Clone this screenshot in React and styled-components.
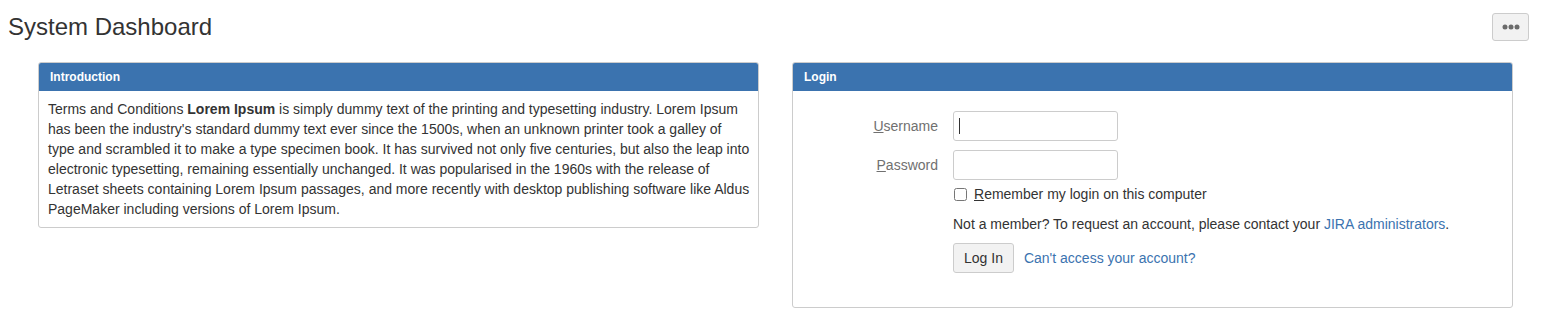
import styled, { createGlobalStyle } from "styled-components";

const GlobalStyle = createGlobalStyle`
  body {
    margin: 0;
    background: #fff;
    font-family: "Liberation Sans", Arial, sans-serif;
    font-size: 14px;
    color: #333;
  }
`;

const PageHeader = styled.header`
  display: flex;
  align-items: center;
  justify-content: space-between;
  padding: 13px 22px 0 8px;
  height: 28px;
`;

const Title = styled.h1`
  margin: 0;
  font-size: 24px;
  line-height: 28px;
  font-weight: normal;
  color: #333;
`;

const MoreButton = styled.button`
  display: flex;
  align-items: center;
  justify-content: center;
  width: 37px;
  height: 28px;
  padding: 0;
  background: #f2f2f2;
  border: 1px solid #ccc;
  border-radius: 3px;
`;

const Columns = styled.div`
  display: grid;
  grid-template-columns: 1fr 1fr;
  align-items: start;
  gap: 33px;
  padding: 21px 38px 0 38px;
`;

const Panel = styled.section`
  border: 1px solid #ccc;
  border-radius: 3px;
  overflow: hidden;
`;

const PanelTitle = styled.h3`
  margin: 0;
  height: 28px;
  padding: 0 11px;
  background: #3b73af;
  color: #fff;
  font-size: 12px;
  font-weight: bold;
  line-height: 28px;
`;

const PanelBody = styled.div`
  padding: ${(p) => p.$pad || "8px 2px 8px 9px"};
  line-height: 20px;
`;

const Row = styled.div`
  display: grid;
  grid-template-columns: 145px 1fr;
  column-gap: 15px;
  align-items: center;
  margin-top: ${(p) => p.$top || 0}px;
`;

const Label = styled.label`
  text-align: right;
  color: #707070;
  u {
    text-decoration: underline;
  }
`;

const InputWrap = styled.div`
  position: relative;
  width: 165px;
`;

const TextInput = styled.input`
  box-sizing: border-box;
  width: 165px;
  height: 30px;
  border: 1px solid #ccc;
  border-radius: 3px;
  padding: 0 6px;
  font: inherit;
  outline: none;
`;

const Caret = styled.span`
  position: absolute;
  left: 6px;
  top: 7px;
  width: 1px;
  height: 16px;
  background: #333;
`;

const CheckLine = styled.label`
  display: flex;
  align-items: center;
  gap: 7px;
  height: 20px;
  input {
    margin: 0 0 0 1px;
    width: 13px;
    height: 13px;
  }
`;

const Link = styled.a`
  color: #3b73af;
  text-decoration: none;
`;

const Actions = styled.div`
  display: flex;
  align-items: center;
  gap: 10px;
`;

const Button = styled.button`
  height: 30px;
  padding: 0 10px;
  background: #f2f2f2;
  border: 1px solid #ccc;
  border-radius: 3px;
  color: #333;
  font: inherit;
`;

const Dots = () => (
  <svg width="18" height="6" viewBox="0 0 18 6">
    {[3, 9, 15].map((x) => (
      <circle key={x} cx={x} cy="3" r="2.5" fill="#6b6b6b" />
    ))}
  </svg>
);

export default function App() {
  return (
    <>
      <GlobalStyle />
      <PageHeader>
        <Title>System Dashboard</Title>
        <MoreButton aria-label="more">
          <Dots />
        </MoreButton>
      </PageHeader>
      <Columns>
        <Panel>
          <PanelTitle>Introduction</PanelTitle>
          <PanelBody>
            Terms and Conditions <b>Lorem Ipsum</b> is simply dummy text of the
            printing and typesetting industry. Lorem Ipsum
            <br />
            has been the industry's standard dummy text ever since the 1500s,
            when an unknown printer took a galley of
            <br />
            type and scrambled it to make a type specimen book. It has survived
            not only five centuries, but also the leap into
            <br />
            electronic typesetting, remaining essentially unchanged. It was
            popularised in the 1960s with the release of
            <br />
            Letraset sheets containing Lorem Ipsum passages, and more recently
            with desktop publishing software like Aldus
            <br />
            PageMaker including versions of Lorem Ipsum.
          </PanelBody>
        </Panel>
        <Panel>
          <PanelTitle>Login</PanelTitle>
          <PanelBody $pad="20px 10px 34px 0">
            <Row>
              <Label>
                <u>U</u>sername
              </Label>
              <InputWrap>
                <TextInput />
                <Caret />
              </InputWrap>
            </Row>
            <Row $top={9}>
              <Label>
                <u>P</u>assword
              </Label>
              <TextInput type="password" />
            </Row>
            <Row $top={4}>
              <span />
              <CheckLine>
                <input type="checkbox" />
                <span>
                  <u>R</u>emember my login on this computer
                </span>
              </CheckLine>
            </Row>
            <Row $top={10}>
              <span />
              <div>
                Not a member? To request an account, please contact your{" "}
                <Link href="#">JIRA administrators</Link>.
              </div>
            </Row>
            <Row $top={9}>
              <span />
              <Actions>
                <Button>Log In</Button>
                <Link href="#">Can't access your account?</Link>
              </Actions>
            </Row>
          </PanelBody>
        </Panel>
      </Columns>
    </>
  );
}
